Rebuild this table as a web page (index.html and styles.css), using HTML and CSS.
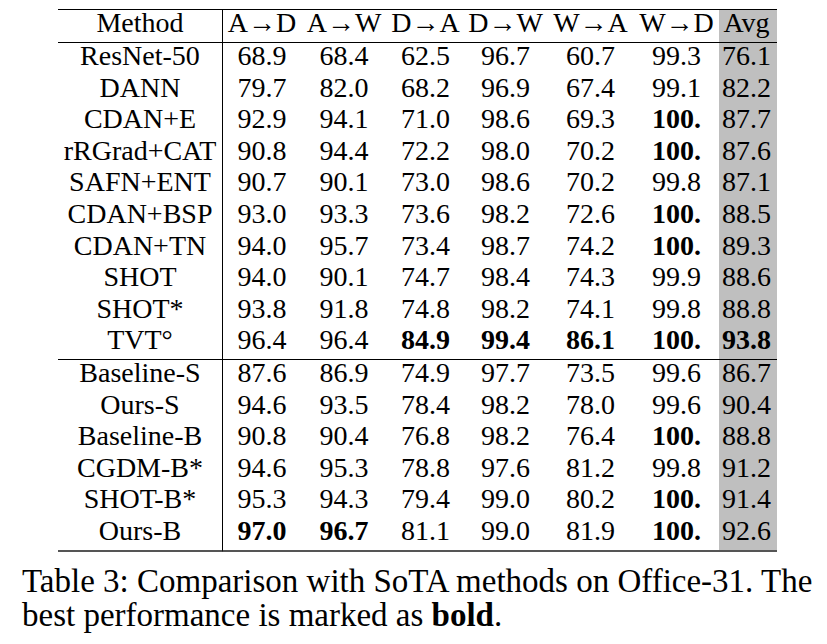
FILE: index.html
```html
<!DOCTYPE html>
<html lang="en">
<head>
<meta charset="utf-8">
<link rel="stylesheet" href="styles.css">
</head>
<body>
<div class="results">
  <div class="row head"><div class="cell m">Method</div><div class="cell">A→D</div><div class="cell">A→W</div><div class="cell">D→A</div><div class="cell">D→W</div><div class="cell">W→A</div><div class="cell">W→D</div><div class="cell avg">Avg</div></div>
  <div class="row"><div class="cell m">ResNet-50</div><div class="cell">68.9</div><div class="cell">68.4</div><div class="cell">62.5</div><div class="cell">96.7</div><div class="cell">60.7</div><div class="cell">99.3</div><div class="cell avg">76.1</div></div>
  <div class="row"><div class="cell m">DANN</div><div class="cell">79.7</div><div class="cell">82.0</div><div class="cell">68.2</div><div class="cell">96.9</div><div class="cell">67.4</div><div class="cell">99.1</div><div class="cell avg">82.2</div></div>
  <div class="row"><div class="cell m">CDAN+E</div><div class="cell">92.9</div><div class="cell">94.1</div><div class="cell">71.0</div><div class="cell">98.6</div><div class="cell">69.3</div><div class="cell b">100.</div><div class="cell avg">87.7</div></div>
  <div class="row"><div class="cell m">rRGrad+CAT</div><div class="cell">90.8</div><div class="cell">94.4</div><div class="cell">72.2</div><div class="cell">98.0</div><div class="cell">70.2</div><div class="cell b">100.</div><div class="cell avg">87.6</div></div>
  <div class="row"><div class="cell m">SAFN+ENT</div><div class="cell">90.7</div><div class="cell">90.1</div><div class="cell">73.0</div><div class="cell">98.6</div><div class="cell">70.2</div><div class="cell">99.8</div><div class="cell avg">87.1</div></div>
  <div class="row"><div class="cell m">CDAN+BSP</div><div class="cell">93.0</div><div class="cell">93.3</div><div class="cell">73.6</div><div class="cell">98.2</div><div class="cell">72.6</div><div class="cell b">100.</div><div class="cell avg">88.5</div></div>
  <div class="row"><div class="cell m">CDAN+TN</div><div class="cell">94.0</div><div class="cell">95.7</div><div class="cell">73.4</div><div class="cell">98.7</div><div class="cell">74.2</div><div class="cell b">100.</div><div class="cell avg">89.3</div></div>
  <div class="row"><div class="cell m">SHOT</div><div class="cell">94.0</div><div class="cell">90.1</div><div class="cell">74.7</div><div class="cell">98.4</div><div class="cell">74.3</div><div class="cell">99.9</div><div class="cell avg">88.6</div></div>
  <div class="row"><div class="cell m">SHOT*</div><div class="cell">93.8</div><div class="cell">91.8</div><div class="cell">74.8</div><div class="cell">98.2</div><div class="cell">74.1</div><div class="cell">99.8</div><div class="cell avg">88.8</div></div>
  <div class="row"><div class="cell m">TVT°</div><div class="cell">96.4</div><div class="cell">96.4</div><div class="cell b">84.9</div><div class="cell b">99.4</div><div class="cell b">86.1</div><div class="cell b">100.</div><div class="cell avg b">93.8</div></div>
  <div class="row mid"><div class="cell m">Baseline-S</div><div class="cell">87.6</div><div class="cell">86.9</div><div class="cell">74.9</div><div class="cell">97.7</div><div class="cell">73.5</div><div class="cell">99.6</div><div class="cell avg">86.7</div></div>
  <div class="row"><div class="cell m">Ours-S</div><div class="cell">94.6</div><div class="cell">93.5</div><div class="cell">78.4</div><div class="cell">98.2</div><div class="cell">78.0</div><div class="cell">99.6</div><div class="cell avg">90.4</div></div>
  <div class="row"><div class="cell m">Baseline-B</div><div class="cell">90.8</div><div class="cell">90.4</div><div class="cell">76.8</div><div class="cell">98.2</div><div class="cell">76.4</div><div class="cell b">100.</div><div class="cell avg">88.8</div></div>
  <div class="row"><div class="cell m">CGDM-B*</div><div class="cell">94.6</div><div class="cell">95.3</div><div class="cell">78.8</div><div class="cell">97.6</div><div class="cell">81.2</div><div class="cell">99.8</div><div class="cell avg">91.2</div></div>
  <div class="row"><div class="cell m">SHOT-B*</div><div class="cell">95.3</div><div class="cell">94.3</div><div class="cell">79.4</div><div class="cell">99.0</div><div class="cell">80.2</div><div class="cell b">100.</div><div class="cell avg">91.4</div></div>
  <div class="row last"><div class="cell m">Ours-B</div><div class="cell b">97.0</div><div class="cell b">96.7</div><div class="cell">81.1</div><div class="cell">99.0</div><div class="cell">81.9</div><div class="cell b">100.</div><div class="cell avg">92.6</div></div>
</div>
<div class="caption">
  <div class="cap-line">Table 3: Comparison with SoTA methods on Office-31. The</div>
  <div class="cap-line cap-second">best performance is marked as <b class="b">bold</b>.</div>
</div>
</body>
</html>
```

FILE: styles.css
```css
body {
  margin: 0;
  padding: 0;
  background: #fff;
  color: #000;
}
.results {
  display: grid;
  grid-template-columns: 165px 78px 86px 77px 83px 87px 85px 58px;
  width: 719px;
  margin: 9px 0 0 58px;
  font-family: "Liberation Serif", "Times New Roman", serif;
  font-size: 28px;
}
.row {
  display: contents;
}
.cell {
  box-sizing: border-box;
  height: 31.6px;
  line-height: 25.6px;
  text-align: center;
  white-space: nowrap;
}
.head > .cell {
  height: 34px;
  border-top: 1px solid #000;
  border-bottom: 1px solid #000;
}
.mid > .cell {
  height: 32.6px;
  border-top: 1px solid #000;
}
.last > .cell {
  height: 33.6px;
  border-bottom: 2px solid #555;
}
.cell.m {
  border-right: 1px solid #000;
}
.cell.avg {
  background: #bfbfbf;
  padding-right: 3px;
}
.b {
  font-weight: bold;
}
.caption {
  margin: 10px 0 0 22px;
  font-family: "Liberation Serif", "Times New Roman", serif;
  font-size: 33px;
  line-height: 38px;
  white-space: nowrap;
}
.cap-second {
  margin-top: -4px;
}
```
